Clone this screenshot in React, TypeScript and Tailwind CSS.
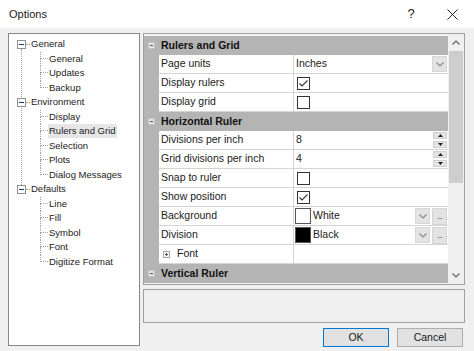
import React from 'react';

const LINE = 'border-[#a0a0a0] border-dotted';

function TreeTop({ label }: { label: string }) {
  return (
    <div className="flex items-center h-[14.5px]">
      <div className="w-[8px]" />
      <div className="w-[9px] h-[9px] border border-[#919191] bg-white flex items-center justify-center relative z-10">
        <div className="w-[5px] h-px bg-[#1f3b6e]" />
      </div>
      <div className={`w-[4px] border-t ${LINE}`} />
      <span className="ml-[1px] whitespace-nowrap">{label}</span>
    </div>
  );
}

function TreeChild({ label, last = false, selected = false }: { label: string; last?: boolean; selected?: boolean }) {
  return (
    <div className="flex items-stretch h-[14.5px]">
      <div className="w-[31px]" />
      <div className="flex flex-col w-[8px]">
        <div className={`h-[7px] border-l border-b ${LINE}`} />
        <div className={`flex-1 ${last ? '' : `border-l ${LINE}`}`} />
      </div>
      <div className="flex items-center">
        <span className={`whitespace-nowrap px-[1px] ${selected ? 'bg-[#e6e6e6]' : ''}`}>{label}</span>
      </div>
    </div>
  );
}

function MinusBox() {
  return (
    <div className="w-[7px] h-[7px] bg-[#e4e4e4] border border-[#c4c4c4] flex items-center justify-center">
      <div className="w-[3px] h-px bg-[#555]" />
    </div>
  );
}

function CatRow({ label }: { label: string }) {
  return (
    <div className="flex h-[19px] items-center bg-[#b4b4b4]">
      <div className="w-[15px] flex justify-center">
        <MinusBox />
      </div>
      <span className="font-bold pl-[2px] text-[#111]">{label}</span>
    </div>
  );
}

function PropRow({ label, children, expander = false }: { label: string; children?: React.ReactNode; expander?: boolean }) {
  return (
    <div className="flex h-[19px]">
      <div className="w-[15px] bg-[#b4b4b4]" />
      <div className="w-[134px] bg-white border-b border-[#d4d4d4] flex items-center pl-[2px]">
        {expander && (
          <div className="w-[7px] h-[7px] border border-[#a8a8a8] bg-[#f4f4f4] flex items-center justify-center ml-[2px] mr-[7px] relative">
            <div className="w-[3px] h-px bg-[#555]" />
            <div className="absolute w-px h-[3px] bg-[#555]" />
          </div>
        )}
        <span>{label}</span>
      </div>
      <div className="flex-1 bg-white border-b border-l border-[#d4d4d4] flex items-center">{children}</div>
    </div>
  );
}

function Check({ on }: { on: boolean }) {
  return (
    <svg width="13" height="13" viewBox="0 0 13 13" className="ml-[3px]">
      <rect x="0.5" y="0.5" width="12" height="12" fill="white" stroke="#333" />
      {on && <path d="M2.5 6.5 L5 9 L10.5 3.5" fill="none" stroke="#333" strokeWidth="1.1" />}
    </svg>
  );
}

function Chevron({ up = false, color = '#707070' }: { up?: boolean; color?: string }) {
  return (
    <svg width="8" height="5" viewBox="0 0 8 5">
      <path d={up ? 'M0.5 4.5 L4 1 L7.5 4.5' : 'M0.5 0.5 L4 4 L7.5 0.5'} fill="none" stroke={color} strokeWidth="1.2" />
    </svg>
  );
}

function DropBtn() {
  return (
    <div className="w-[15px] h-[16px] bg-[#e3e3e3] border border-[#d6d6d6] flex items-center justify-center">
      <Chevron color="#8a8a8a" />
    </div>
  );
}

function Spin() {
  return (
    <div className="ml-auto mr-[1px] flex flex-col gap-[2px]">
      <div className="w-[14px] h-[7px] bg-[#e3e3e3] border border-[#d0d0d0] flex items-center justify-center">
        <svg width="5" height="3" viewBox="0 0 5 3"><path d="M0 3 L2.5 0 L5 3 Z" fill="#222" /></svg>
      </div>
      <div className="w-[14px] h-[7px] bg-[#e3e3e3] border border-[#d0d0d0] flex items-center justify-center">
        <svg width="5" height="3" viewBox="0 0 5 3"><path d="M0 0 L2.5 3 L5 0 Z" fill="#222" /></svg>
      </div>
    </div>
  );
}

function ColorValue({ color, name }: { color: string; name: string }) {
  return (
    <div className="flex items-center w-full h-full">
      <div className={`w-[16px] h-[16px] border border-[#555] ml-[1px] ${color}`} />
      <span className="ml-[2px]">{name}</span>
      <div className="ml-auto flex items-center gap-[2px] mr-[1px]">
        <DropBtn />
        <div className="w-[15px] h-[17px] bg-[#e3e3e3] border border-[#d6d6d6] flex items-end justify-center pb-[3px]">
          <span className="text-[8px] leading-none tracking-[-0.5px]">...</span>
        </div>
      </div>
    </div>
  );
}

export default function App() {
  return (
    <div className="w-[474px] h-[351px] bg-[#f0f0f0] font-['Liberation_Sans',Arial,sans-serif] text-[#1a1a1a] overflow-hidden">
      {/* Title bar */}
      <div className="h-[28px] bg-white flex items-center pl-[9px] pr-[7px]">
        <span className="text-[11px]">Options</span>
        <div className="ml-auto w-[30px] flex justify-center text-[13px]">?</div>
        <div className="ml-[11px] w-[30px] flex justify-center">
          <svg width="11" height="11" viewBox="0 0 11 11">
            <path d="M0.5 0.5 L10.5 10.5 M10.5 0.5 L0.5 10.5" stroke="#222" strokeWidth="1" />
          </svg>
        </div>
      </div>

      <div className="flex pl-[8px] pt-[5px]">
        {/* Tree */}
        <div className="w-[132px] h-[313px] border border-[#828790] bg-white text-[9.5px] text-[#222]">
          <div className="relative pt-[3px]">
            <div className={`absolute left-[12px] top-[15px] h-[136px] border-l ${LINE}`} />
            <TreeTop label="General" />
            <TreeChild label="General" />
            <TreeChild label="Updates" />
            <TreeChild label="Backup" last />
            <TreeTop label="Environment" />
            <TreeChild label="Display" />
            <TreeChild label="Rulers and Grid" selected />
            <TreeChild label="Selection" />
            <TreeChild label="Plots" />
            <TreeChild label="Dialog Messages" last />
            <TreeTop label="Defaults" />
            <TreeChild label="Line" />
            <TreeChild label="Fill" />
            <TreeChild label="Symbol" />
            <TreeChild label="Font" />
            <TreeChild label="Digitize Format" last />
          </div>
        </div>

        {/* Right column */}
        <div className="ml-[3px] w-[322px] flex flex-col">
          <div className="h-[252px] border border-[#a0a0a0] bg-[#f4f4f4] flex text-[10.5px]">
            <div className="flex-1 pt-[2px]">
              <CatRow label="Rulers and Grid" />
              <PropRow label="Page units">
                <span className="ml-[2px]">Inches</span>
                <div className="ml-auto mr-[1px]"><DropBtn /></div>
              </PropRow>
              <PropRow label="Display rulers"><Check on /></PropRow>
              <PropRow label="Display grid"><Check on={false} /></PropRow>
              <CatRow label="Horizontal Ruler" />
              <PropRow label="Divisions per inch">
                <span className="ml-[2px]">8</span>
                <Spin />
              </PropRow>
              <PropRow label="Grid divisions per inch">
                <span className="ml-[2px]">4</span>
                <Spin />
              </PropRow>
              <PropRow label="Snap to ruler"><Check on={false} /></PropRow>
              <PropRow label="Show position"><Check on /></PropRow>
              <PropRow label="Background"><ColorValue color="bg-white" name="White" /></PropRow>
              <PropRow label="Division"><ColorValue color="bg-black" name="Black" /></PropRow>
              <PropRow label="Font" expander />
              <CatRow label="Vertical Ruler" />
            </div>
            {/* Scrollbar */}
            <div className="w-[16px] bg-[#f0f0f0] flex flex-col items-stretch">
              <div className="h-[17px] flex items-center justify-center"><Chevron up color="#606060" /></div>
              <div className="h-[132px] mx-[1px] bg-[#cdcdcd]" />
              <div className="flex-1" />
              <div className="h-[17px] flex items-center justify-center"><Chevron color="#606060" /></div>
            </div>
          </div>

          <div className="mt-[4px] h-[34px] border border-[#a0a0a0] bg-[#f0f0f0]" />

          <div className="mt-[5px] flex justify-end gap-[8px] pr-[2px] text-[10.5px]">
            <button className="w-[66px] h-[19px] bg-[#e1e1e1] border border-[#0078d7] flex items-center justify-center">OK</button>
            <button className="w-[66px] h-[19px] bg-[#e1e1e1] border border-[#adadad] flex items-center justify-center">Cancel</button>
          </div>
        </div>
      </div>
    </div>
  );
}
